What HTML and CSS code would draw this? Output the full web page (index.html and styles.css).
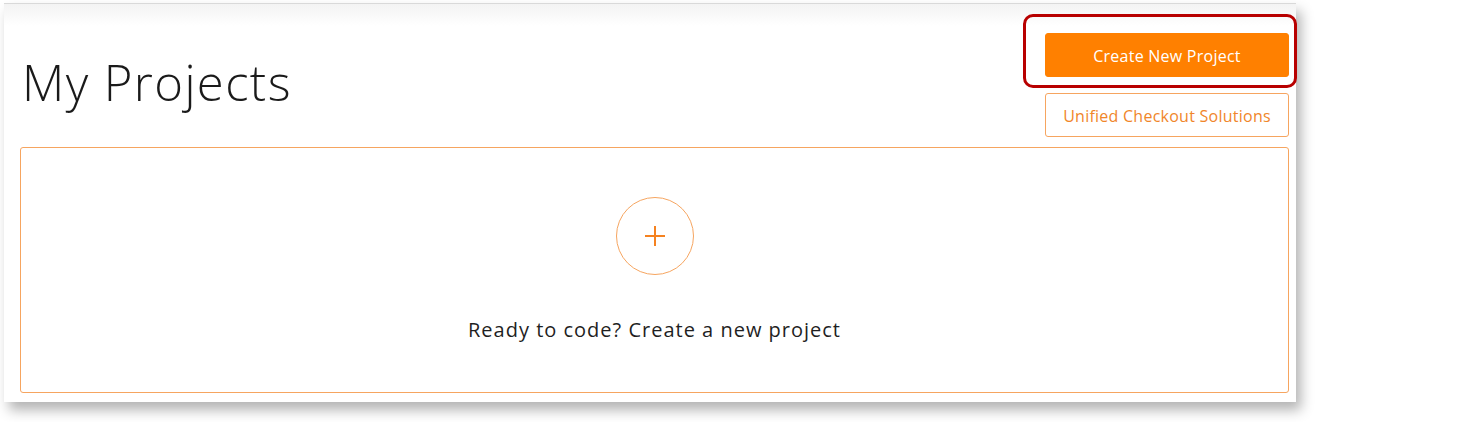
FILE: index.html
```html
<!DOCTYPE html>
<html lang="en">
<head>
<meta charset="utf-8">
<title>My Projects</title>
<link rel="stylesheet" href="styles.css">
</head>
<body>
<div class="card">
  <div class="header">
    <h1 class="title">My Projects</h1>
    <div class="actions">
      <button class="btn btn-primary">Create New Project</button>
      <button class="btn btn-outline">Unified Checkout Solutions</button>
    </div>
  </div>
  <div class="empty">
    <div class="plus-circle">
      <svg width="22" height="22" viewBox="0 0 22 22"><path d="M11 1v20M1 11h20" stroke="#f58220" stroke-width="2" fill="none"/></svg>
    </div>
    <p class="empty-text">Ready to code? Create a new project</p>
  </div>
  <div class="highlight"></div>
</div>
</body>
</html>
```
FILE: styles.css
```css
html, body {
  margin: 0;
  padding: 0;
  background: #ffffff;
}
body {
  font-family: "Open Sans", Lato, "Liberation Sans", sans-serif;
  color: #1a1a1a;
  padding-bottom: 20px;
}
.card {
  position: relative;
  margin: 3px 0 0 4px;
  width: 1292px;
  height: 399px;
  box-sizing: border-box;
  border-top: 1px solid #d9d9d9;
  background: linear-gradient(#f3f3f3 0, #ffffff 22px, #ffffff 100%);
  box-shadow: 5px 8px 12px rgba(0, 0, 0, 0.3);
  padding: 0 7px 0 16px;
}
.header {
  display: flex;
  justify-content: space-between;
  align-items: flex-start;
}
.title {
  margin: 46px 0 0 2px;
  font-weight: 300;
  font-size: 49px;
  line-height: 64px;
  letter-spacing: 1.4px;
  color: #1a1a1a;
}
.actions {
  display: flex;
  flex-direction: column;
  gap: 16px;
  padding-top: 29px;
}
.btn {
  width: 244px;
  height: 44px;
  border-radius: 3px;
  font-family: "Open Sans", Lato, "Liberation Sans", sans-serif;
  font-size: 16px;
  letter-spacing: 0.25px;
  font-weight: 400;
  cursor: pointer;
  box-sizing: border-box;
  padding: 1px 0 0 0;
}
.btn-primary {
  background: #ff8000;
  border: 1px solid #ff8000;
  color: #ffffff;
}
.btn-outline {
  background: #ffffff;
  border: 1px solid #f6a560;
  color: #f0862a;
}
.empty {
  margin-top: 10px;
  height: 246px;
  box-sizing: border-box;
  border: 1px solid #f6a560;
  border-radius: 3px;
  display: flex;
  flex-direction: column;
  align-items: center;
  padding-top: 49px;
}
.plus-circle {
  width: 78px;
  height: 78px;
  box-sizing: border-box;
  border: 1px solid #f6a560;
  border-radius: 50%;
  display: flex;
  align-items: center;
  justify-content: center;
}
.empty-text {
  margin: 41px 0 0 0;
  font-size: 20px;
  line-height: 28px;
  letter-spacing: 1px;
  color: #1f1f1f;
}
.highlight {
  position: absolute;
  left: 1019px;
  top: 10px;
  width: 274px;
  height: 74px;
  box-sizing: border-box;
  border: 3px solid #b80000;
  border-radius: 10px;
  pointer-events: none;
}
```
